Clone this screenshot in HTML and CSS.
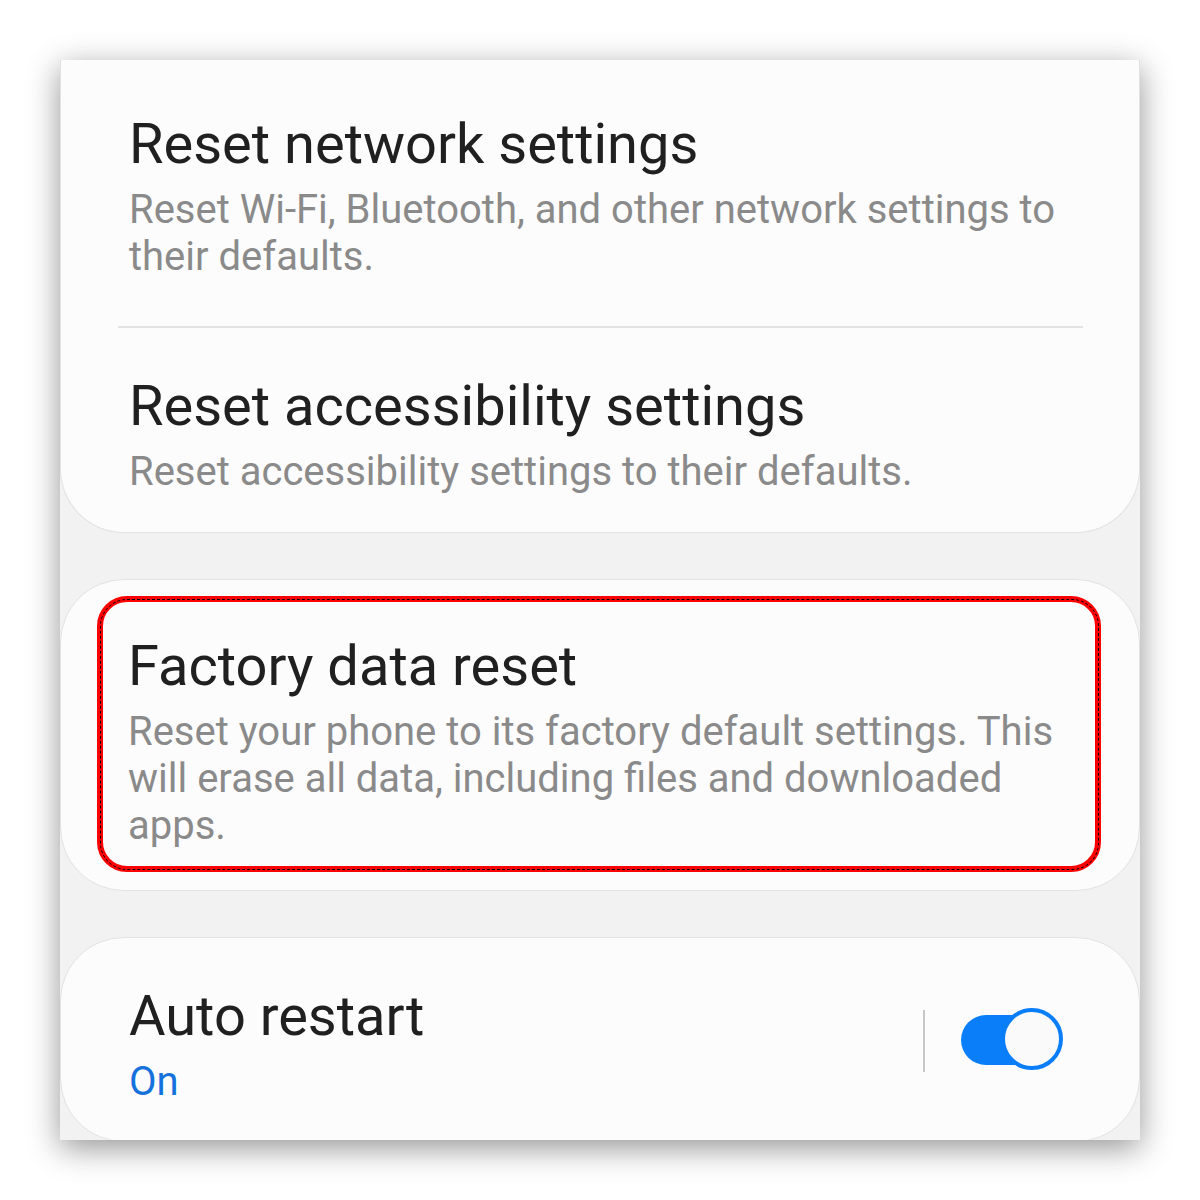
FILE: index.html
```html
<!DOCTYPE html>
<html lang="en">
<head>
<meta charset="utf-8">
<title>Reset</title>
<link rel="stylesheet" href="styles.css">
</head>
<body>
<div class="screen">
  <section class="card card-top">
    <div class="item item-first">
      <div class="title">Reset network settings</div>
      <div class="sub">Reset Wi-Fi, Bluetooth, and other network settings to their defaults.</div>
    </div>
    <div class="divider"></div>
    <div class="item item-second">
      <div class="title">Reset accessibility settings</div>
      <div class="sub">Reset accessibility settings to their defaults.</div>
    </div>
  </section>

  <section class="card card-factory">
    <div class="highlight">
      <div class="title">Factory data reset</div>
      <div class="sub">Reset your phone to its factory default settings. This will erase all data, including files and downloaded apps.</div>
    </div>
  </section>

  <section class="card card-auto">
    <div class="auto-text">
      <div class="title">Auto restart</div>
      <div class="sub on">On</div>
    </div>
    <div class="vsep"></div>
    <div class="toggle"><div class="track"></div><div class="thumb"></div></div>
  </section>
</div>
</body>
</html>
```
FILE: styles.css
```css
html, body {
  margin: 0;
  padding: 0;
  background: #ffffff;
}
body {
  font-family: Roboto, "Noto Sans", "Liberation Sans", sans-serif;
  padding: 60px;
  width: 1080px;
}
.screen {
  width: 1080px;
  height: 1080px;
  background: #f2f2f2;
  overflow: hidden;
  box-shadow: 0 8px 30px rgba(0, 0, 0, 0.42);
  display: flex;
  flex-direction: column;
  gap: 46px;
}
.card {
  background: #fcfcfc;
  border: 1px solid #e2e2e2;
  border-radius: 64px;
  flex-shrink: 0;
  box-sizing: border-box;
}
.title {
  font-size: 56px;
  line-height: 64px;
  color: #202020;
}
.sub {
  font-size: 40px;
  line-height: 47px;
  color: #8a8a8a;
  margin-top: 10px;
}
.card-top {
  border-top: none;
  border-radius: 0 0 64px 64px;
  padding: 52px 56px 37px 57px;
}
.item {
  padding-left: 11px;
}
.item-first {
  padding-bottom: 46px;
}
.divider {
  height: 2px;
  background: #e3e3e3;
}
.item-second {
  padding-top: 46px;
}
.card-factory {
  padding: 16px 38px 18px 36px;
}
.highlight {
  position: relative;
  border: 6px solid #ff0000;
  border-radius: 30px;
  padding: 32px 8px 17px 25px;
}
.highlight::before {
  content: "";
  position: absolute;
  inset: -3.5px;
  border: 1px dashed #000000;
  border-radius: 27px;
}
.card-auto {
  display: flex;
  align-items: flex-start;
  padding: 46px 76px 0 68px;
  height: 205px;
}
.auto-text {
  flex: 1;
}
.on {
  color: #1572dc;
  margin-top: 10px;
}
.vsep {
  width: 2px;
  height: 62px;
  background: #c8c8c8;
  margin-top: 26px;
  margin-right: 36px;
}
.toggle {
  position: relative;
  width: 102px;
  height: 64px;
  margin-top: 24px;
}
.track {
  position: absolute;
  left: 0;
  top: 7px;
  width: 84px;
  height: 50px;
  border-radius: 25px;
  background: #0a7ef9;
}
.thumb {
  position: absolute;
  right: 0;
  top: 0;
  width: 62px;
  height: 62px;
  box-sizing: border-box;
  border-radius: 50%;
  border: 4px solid #0a7ef9;
  background: #fafafa;
}
```
